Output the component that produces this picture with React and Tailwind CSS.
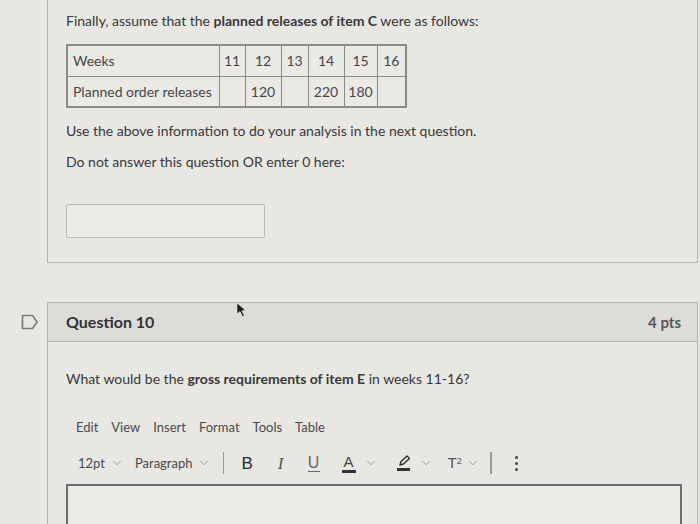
import { ChevronDown } from 'lucide-react';

const WEEKS = ['11', '12', '13', '14', '15', '16'];
const RELEASES = ['', '120', '', '220', '180', ''];
const COL_W = ['w-[26px]', 'w-[36px]', 'w-[27px]', 'w-[36px]', 'w-[33px]', 'w-[29px]'];

const MENU = ['Edit', 'View', 'Insert', 'Format', 'Tools', 'Table'];

function Chev() {
  return <ChevronDown className="h-[14px] w-[14px] text-[#8a8a8a]" strokeWidth={1.4} />;
}

function FlagIcon() {
  return (
    <svg width="18" height="16" viewBox="0 0 18 16" className="text-[#7a7a7a]">
      <path d="M1.5 1.5 H11.5 L16 8 L11.5 14.5 H1.5 Z" fill="none" stroke="currentColor" strokeWidth="1.6" strokeLinejoin="round" />
    </svg>
  );
}

function Cursor() {
  return (
    <svg width="12" height="16" viewBox="0 0 12 16" className="absolute left-[236px] top-[302px]">
      <path d="M1 1 L1 12 L4 9.5 L6.5 14.5 L8.3 13.6 L5.9 8.8 L9.8 8.6 Z" fill="#1a1a1a" stroke="#f2f2f2" strokeWidth="0.6" />
    </svg>
  );
}

function Toolbar() {
  return (
    <div className="mt-[13px] flex items-center pl-[12px] text-[13px] text-[#4a4a4a]">
      <span className="flex items-center gap-[5px]">
        12pt <Chev />
      </span>
      <span className="ml-[11px] flex items-center gap-[4px]">
        Paragraph <Chev />
      </span>
      <span className="ml-[12px] h-[22px] w-px bg-[#9a9a9a]" />
      <span className="ml-[18px] text-[17px] font-normal text-[#2a2a2a]" style={{ fontFamily: '"Liberation Sans", sans-serif' }}>
        B
      </span>
      <span className="ml-[25px] text-[17px] italic text-[#555]" style={{ fontFamily: '"Liberation Serif", serif' }}>
        I
      </span>
      <span className="ml-[24px] flex flex-col items-center">
        <span className="text-[16px] leading-[16px] text-[#666]" style={{ fontFamily: '"Liberation Sans", sans-serif' }}>U</span>
        <span className="h-px w-[12px] bg-[#666]" />
      </span>
      <span className="ml-[22px] flex flex-col items-center">
        <span className="text-[15px] leading-[15px] text-[#444]" style={{ fontFamily: '"Liberation Sans", sans-serif' }}>A</span>
        <span className="mt-[1px] h-[3px] w-[14px] bg-[#333]" />
      </span>
      <span className="ml-[8px]">
        <Chev />
      </span>
      <span className="ml-[19px] flex flex-col items-center">
        <svg width="14" height="12" viewBox="0 0 14 12">
          <path d="M3 10 L4 6.5 L10 1 L12.5 3.5 L6.5 9 Z M3 10 L6.5 9" fill="none" stroke="#333" strokeWidth="1.4" strokeLinejoin="round" />
        </svg>
        <span className="mt-[1px] h-[3px] w-[13px] bg-[#333]" />
      </span>
      <span className="ml-[8px]">
        <Chev />
      </span>
      <span className="ml-[15px] text-[15px] text-[#555]" style={{ fontFamily: '"Liberation Sans", sans-serif' }}>
        T<sup className="text-[9px]">2</sup>
      </span>
      <span className="ml-[4px]">
        <Chev />
      </span>
      <span className="ml-[10px] h-[22px] w-[2px] bg-[#9a9a9a]" />
      <span className="ml-[23px] flex flex-col gap-[3px]">
        <span className="h-[3px] w-[3px] rounded-full bg-[#444]" />
        <span className="h-[3px] w-[3px] rounded-full bg-[#444]" />
        <span className="h-[3px] w-[3px] rounded-full bg-[#444]" />
      </span>
    </div>
  );
}

export default function App() {
  return (
    <div
      className="relative h-[524px] w-[700px] overflow-hidden bg-[#e8e7e3] text-[14px] text-[#383838]"
      style={{ fontFamily: 'Lato, "Open Sans", sans-serif' }}
    >
      <div className="ml-[47px] w-[651px]">
        {/* previous question, its top is scrolled off */}
        <div className="h-[263px] border-x border-b border-[#b4b3af] pl-[18px] pt-[11px]">
          <p className="leading-[20px]">
            Finally, assume that the <b>planned releases of item C</b> were as follows:
          </p>
          <table className="mt-[13px] border-collapse border-2 border-[#8a8a8a] bg-[#eae9e6] text-[#474747]">
            <tbody>
              <tr className="h-[31px]">
                <td className="w-[152px] border border-[#8a8a8a] pl-[5px]">Weeks</td>
                {WEEKS.map((w, i) => (
                  <td key={w} className={`${COL_W[i]} border border-[#8a8a8a] text-center`}>
                    {w}
                  </td>
                ))}
              </tr>
              <tr className="h-[31px]">
                <td className="border border-[#8a8a8a] pl-[5px]">Planned order releases</td>
                {RELEASES.map((r, i) => (
                  <td key={i} className="border border-[#8a8a8a] text-center">
                    {r}
                  </td>
                ))}
              </tr>
            </tbody>
          </table>
          <p className="mt-[13px] leading-[20px]">Use the above information to do your analysis in the next question.</p>
          <p className="mt-[11px] leading-[20px]">Do not answer this question OR enter 0 here:</p>
          <div className="mt-[32px] h-[34px] w-[199px] rounded-[2px] border border-[#b9b8b4] bg-[#ebeae7]" />
        </div>

        {/* Question 10 */}
        <div className="relative mt-[39px] border border-[#b4b3af]">
          <div className="absolute left-[-27px] top-[11px]">
            <FlagIcon />
          </div>
          <div className="flex h-[39px] items-center justify-between border-b border-[#b4b3af] bg-[#dedcd9] pl-[18px] pr-[16px]">
            <span className="text-[16px] font-bold text-[#333]">Question 10</span>
            <span className="text-[15px] font-bold text-[#555]">4 pts</span>
          </div>
          <div className="pl-[18px] pt-[27px]">
            <p className="leading-[20px]">
              What would be the <b>gross requirements of item E</b> in weeks 11-16?
            </p>
            <div className="mt-[29px] flex gap-[13px] pl-[10px] text-[13px] text-[#4a4a4a]">
              {MENU.map((m) => (
                <span key={m}>{m}</span>
              ))}
            </div>
            <Toolbar />
            <div className="mt-[8px] h-[60px] w-[616px] border-2 border-[#6a6e73] bg-[#eceae7]" />
          </div>
        </div>
      </div>
      <Cursor />
    </div>
  );
}
